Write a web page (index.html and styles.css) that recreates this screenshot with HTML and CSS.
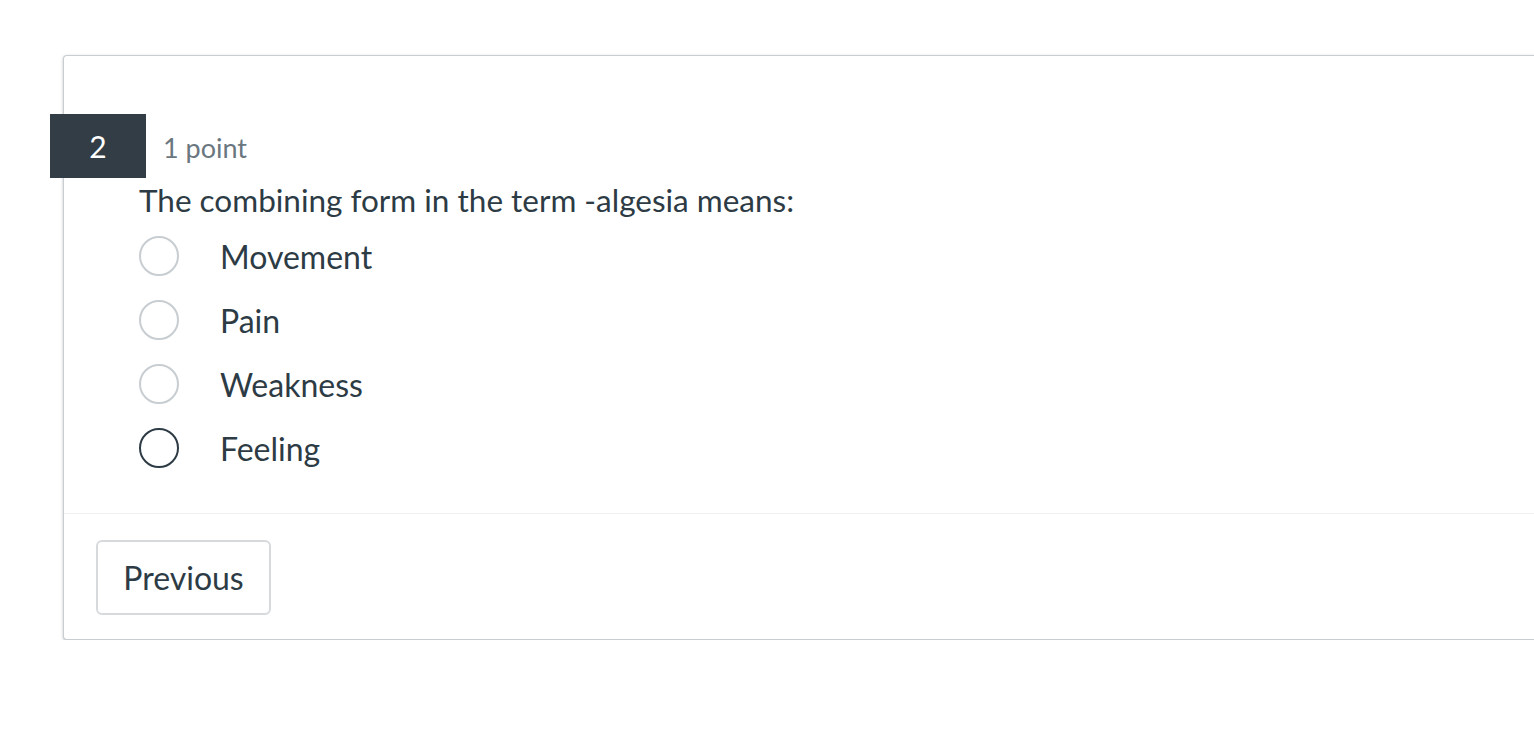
FILE: index.html
```html
<!DOCTYPE html>
<html>
<head>
<meta charset="utf-8">
<link rel="stylesheet" href="styles.css">
</head>
<body>
<div class="page">
  <div class="card">
    <div class="question">
      <div class="header">
        <div class="badge">2</div>
        <div class="points">1 point</div>
      </div>
      <div class="body">
        <div class="prompt">The combining form in the term -algesia means:</div>
        <div class="options">
          <label class="option"><span class="radio"></span><span class="label">Movement</span></label>
          <label class="option"><span class="radio"></span><span class="label">Pain</span></label>
          <label class="option"><span class="radio"></span><span class="label">Weakness</span></label>
          <label class="option"><span class="radio dark"></span><span class="label">Feeling</span></label>
        </div>
      </div>
    </div>
    <div class="footer">
      <button class="btn">Previous</button>
    </div>
  </div>
</div>
</body>
</html>
```

FILE: styles.css
```css
html, body {
  margin: 0;
  padding: 0;
  background: #fff;
  font-family: Lato, "Open Sans", sans-serif;
  color: #2d3b45;
  overflow: hidden;
}
.page {
  padding: 55px 0 0 63px;
  width: 1600px;
}
.card {
  width: 1520px;
  border: 1px solid #c7cdd1;
  border-right: none;
  border-radius: 4px 0 0 4px;
  box-shadow: 0 1px 3px rgba(0,0,0,0.25);
  background: #fff;
}
.question {
  padding-top: 58px;
  padding-bottom: 45px;
  border-bottom: 1px solid #f0f0f0;
}
.header {
  display: flex;
  align-items: center;
  margin-left: -14px;
  height: 64px;
}
.badge {
  width: 96px;
  height: 64px;
  background: #323d46;
  color: #fff;
  font-size: 30px;
  display: flex;
  align-items: center;
  justify-content: center;
}
.points {
  margin-left: 17px;
  font-size: 27px;
  color: #6b7780;
  position: relative;
  top: 1px;
}
.body {
  padding-left: 75px;
}
.prompt {
  font-size: 31.5px;
  line-height: 44px;
}
.options {
  display: flex;
  flex-direction: column;
  gap: 24px;
  margin-top: 14px;
}
.option {
  display: flex;
  align-items: center;
  height: 40px;
}
.radio {
  width: 36px;
  height: 36px;
  border: 2px solid #c7cdd1;
  border-radius: 50%;
  box-sizing: content-box;
  flex: none;
}
.radio.dark {
  border-color: #2d3b45;
}
.label {
  margin-left: 41px;
  font-size: 32px;
}
.footer {
  padding: 26px 32px 24px;
}
.btn {
  font-family: Lato, "Open Sans", sans-serif;
  font-size: 32px;
  color: #2d3b45;
  background: #fff;
  border: 2px solid #d7dadd;
  border-radius: 6px;
  width: 175px;
  height: 75px;
  padding: 0;
}
```
